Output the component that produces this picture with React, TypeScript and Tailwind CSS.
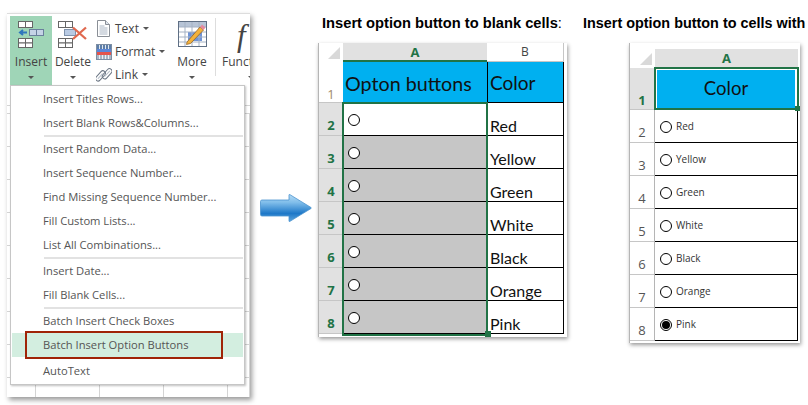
const ui = { fontFamily: '"Open Sans", sans-serif' };
const cell = { fontFamily: 'Lato, "Open Sans", sans-serif' };
const title = { fontFamily: '"Liberation Sans", sans-serif' };

const menu: (string | null)[] = [
  "Insert Titles Rows...",
  "Insert Blank Rows&Columns...",
  null,
  "Insert Random Data...",
  "Insert Sequence Number...",
  "Find Missing Sequence Number...",
  "Fill Custom Lists...",
  "List All Combinations...",
  null,
  "Insert Date...",
  "Fill Blank Cells...",
  null,
  "Batch Insert Check Boxes",
];

function Caret({ className = "" }: { className?: string }) {
  return <span className={`inline-block w-0 h-0 border-x-[3.5px] border-x-transparent border-t-[3.5px] border-t-[#555] ${className}`} />;
}

function Cells({ y, h }: { y: number; h: number }) {
  return (
    <g fill="#fff" stroke="#666">
      <rect x=".5" y={y + 0.5} width="7" height={h} />
      <rect x="7.5" y={y + 0.5} width="7" height={h} />
    </g>
  );
}

function InsertIcon() {
  return (
    <svg width="27" height="27" viewBox="0 0 27 27">
      <Cells y={0} h={6} />
      <Cells y={17} h={4.500} />
      <Cells y={21.500} h={4.500} />
      <rect x="11.500" y="8.500" width="7" height="6" fill="#c5d3e6" stroke="#6a7f9c" />
      <rect x="18.500" y="8.500" width="7" height="6" fill="#c5d3e6" stroke="#6a7f9c" />
      <path d="M9 11.500H3M5 9 2 11.500 5 14" fill="none" stroke="#2f77bd" strokeWidth="2" />
    </svg>
  );
}

function DeleteIcon() {
  return (
    <svg width="30" height="27" viewBox="0 0 30 27">
      <Cells y={0} h={6} />
      <Cells y={17} h={4.500} />
      <Cells y={21.500} h={4.500} />
      <rect x="6.500" y="8.500" width="11" height="6" fill="#b9cbe4" stroke="#8093ad" />
      <path d="M15 6.500 28 18M28 6.500 15 18" stroke="#e0694f" strokeWidth="2.300" fill="none" />
    </svg>
  );
}

function DocIcon() {
  return (
    <svg width="15" height="17" viewBox="0 0 15 17">
      <path d="M1.500.5h8l4 4v12h-12z" fill="#fff" stroke="#8a8f96" />
      <path d="M9.500.5v4h4" fill="#dfe6ee" stroke="#8a8f96" />
      <path d="M3.500 6h5M3.500 8h8M3.500 10h8M3.500 12h8M3.500 14h8" stroke="#a9b4c2" />
    </svg>
  );
}

function FormatIcon() {
  return (
    <svg width="16" height="16" viewBox="0 0 16 16">
      <rect x=".5" y=".5" width="15" height="15" fill="#fff" stroke="#7d8ea3" />
      <rect x="1" y="1" width="14" height="4" fill="#5d7ea8" />
      <path d="M3.500 1v4M6.500 1v4M9.500 1v4M12.500 1v4" stroke="#dfe6ee" />
      <rect x="1" y="5" width="14" height="3" fill="#5b86d8" />
      <rect x="1" y="8" width="14" height="3" fill="#e4544c" />
      <rect x="1" y="11" width="14" height="4" fill="#aab6c6" />
      <path d="M3.500 11v4M6.500 11v4M9.500 11v4M12.500 11v4" stroke="#eef1f5" />
    </svg>
  );
}

function LinkIcon() {
  return (
    <svg width="16" height="16" viewBox="0 0 16 16" fill="none">
      <g transform="rotate(-48 8 8)">
        <rect x="-1" y="3.500" width="12" height="5" rx="2.500" stroke="#6c7785" />
        <rect x="5" y="7" width="12" height="5" rx="2.500" stroke="#6c7785" />
        <path d="M1 6h7M7 9.500h8" stroke="#b6bfca" />
      </g>
    </svg>
  );
}

function MoreIcon() {
  return (
    <svg width="29" height="27" viewBox="0 0 29 27">
      <rect x=".5" y=".5" width="28" height="25" fill="#fff" stroke="#5f6f84" />
      <rect x="1" y="1" width="27" height="5" fill="#b7c4d6" />
      <rect x="10" y="11" width="14" height="9" fill="#6f93d6" />
      <path d="M1 6h27M1 11h27M1 16h27M1 21h27M7 1v24M14 1v24M21 1v24" stroke="#a5b2c4" />
      <path d="M9 21 22 6l3.500 3-13 13.500-4 1z" fill="#f3b23c" stroke="#8d5a1e" strokeWidth=".7" />
      <path d="M22 6l2-2.500 3.500 3-2 2.500z" fill="#e48aa0" />
    </svg>
  );
}

function Corner() {
  return (
    <svg width="12" height="12" viewBox="0 0 12 12">
      <path d="M12 0V12H0z" fill="#d9d9d9" />
    </svg>
  );
}

function RibbonItem({ label, icon, active, width }: { label: string; icon: React.ReactNode; active?: boolean; width: string }) {
  return (
    <div className={`flex flex-col items-center pt-[5px] ${width} ${active ? "bg-[#9fd5b7]" : ""}`}>
      <div className="h-[27px] flex items-center">{icon}</div>
      <span className="text-[12px] leading-[16px] mt-[6px] text-[#444] whitespace-nowrap">{label}</span>
      <Caret className="mt-[6px]" />
    </div>
  );
}

function SmallItem({ icon, label }: { icon: React.ReactNode; label: string }) {
  return (
    <div className="h-[23px] flex items-center gap-[3px] text-[12px] text-[#444]">
      <span className="w-[17px] flex justify-center">{icon}</span>
      {label}
      <Caret className="ml-[1px]" />
    </div>
  );
}

function ExcelMenu() {
  return (
    <div className="relative w-[243px] h-[384px] bg-white border-t border-[#ddd] shadow-[2px_3px_5px_rgba(0,0,0,0.4)]" style={ui}>
      <div className="flex h-[92px] pl-[3px] pt-[2px] border-b border-[#d4d4d4]">
        <RibbonItem label="Insert" icon={<InsertIcon />} active width="w-[42px]" />
        <RibbonItem label="Delete" icon={<DeleteIcon />} width="w-[42px]" />
        <div className="w-[75px] ml-[1px] pt-[1px]">
          <SmallItem icon={<DocIcon />} label="Text" />
          <SmallItem icon={<FormatIcon />} label="Format" />
          <SmallItem icon={<LinkIcon />} label="Link" />
        </div>
        <RibbonItem label="More" icon={<MoreIcon />} width="w-[44px]" />
        <div className="w-px h-[58px] mt-[2px] bg-[#ddd] ml-[1px]" />
        <div className="flex-1 overflow-hidden flex flex-col items-start pl-[6px] relative">
          <span className="absolute left-[21px] top-[4px] text-[31px] leading-[31px] italic text-[#444]" style={{ fontFamily: '"Liberation Serif", serif' }}>f</span>
          <span className="text-[12px] leading-[16px] mt-[38px] text-[#444] whitespace-nowrap">Function</span>
          <Caret className="mt-[6px] ml-[26px]" />
        </div>
      </div>
      <div className="pt-[7px] h-[291px] overflow-hidden">
        <div className="grid grid-cols-[29px_64px_64px_64px_1fr] auto-rows-[33px] border-t border-[#d4d4d4]">
          {Array.from({ length: 45 }).map((_, i) => (
            <div key={i} className="border-r border-b border-[#d4d4d4]" />
          ))}
        </div>
      </div>
      {/* dropdown opened over the ribbon */}
      <div className="absolute left-[3px] top-[71px] w-[235px] h-[300px] bg-white border border-[#c6c6c6] shadow-[1px_1px_2px_rgba(0,0,0,0.25)] px-[1px] pt-[1px]">
        {menu.map((m, i) =>
          m === null ? (
            <div key={i} className="h-[2px] ml-[32px] bg-[#e2e2e2]" />
          ) : (
            <div key={i} className="h-[24px] pl-[31px] flex items-center text-[11.2px] text-[#555] whitespace-nowrap">{m}</div>
          ),
        )}
        <div className="relative h-[24px] bg-[#d3eee0] pl-[31px] flex items-center text-[11.2px] text-[#555] whitespace-nowrap">
          Batch Insert Option Buttons
          <div className="absolute left-[13px] -top-[2px] w-[198px] h-[28px] border-2 border-[#a02408]" />
        </div>
        <div className="h-[2px]" />
        <div className="h-[24px] pl-[31px] flex items-center text-[11.2px] text-[#555]">AutoText</div>
      </div>
    </div>
  );
}

function BlueArrow() {
  return (
    <svg width="52" height="28" viewBox="0 0 52 28">
      <defs>
        <linearGradient id="ar" x1="0" y1="0" x2="0" y2="1">
          <stop offset="0" stopColor="#b6dcf5" />
          <stop offset=".3" stopColor="#7fbdea" />
          <stop offset=".7" stopColor="#1e78c8" />
          <stop offset="1" stopColor="#5da5dc" />
        </linearGradient>
      </defs>
      <path d="M2 6h27V1q0-1 1-.3L51 13.500q.8.5 0 1L30 27.300q-1 .7-1-.3V22H2q-1.500 0-1.500-1.500v-13Q.5 6 2 6z" fill="url(#ar)" stroke="#4a93cf" strokeWidth=".8" />
    </svg>
  );
}

function Radio({ on }: { on?: boolean }) {
  return (
    <span className="shrink-0 w-[12px] h-[12px] rounded-full border border-black bg-white flex items-center justify-center">
      {on && <span className="w-[8px] h-[8px] rounded-full bg-black" />}
    </span>
  );
}

function Head({ n, active, h, muted }: { n: number; active?: boolean; h: string; muted?: boolean }) {
  return (
    <div className={`${h} flex items-end justify-center border-b border-[#c6c6c6] text-[13px] leading-[16px] ${active ? "bg-[#e1e1e1] text-[#217346] font-bold" : "bg-white text-[#555]"} ${muted ? "text-[#a08a6a]" : ""}`}>
      {n}
    </div>
  );
}

const col1 = ["Red", "Yellow", "Green", "White", "Black", "Orange", "Pink"];

function LeftSheet() {
  return (
    <div className="w-[249px] h-[294px] bg-white shadow-[1px_2px_4px_rgba(0,0,0,0.4)] border-l border-[#b5b5b5]" style={ui}>
      <div className="flex h-[19px]">
        <div className="w-[24px] flex items-end justify-end pr-[3px] pb-[3px]"><Corner /></div>
        <div className="w-[144px] bg-[#e1e1e1] border-b-2 border-[#217346] text-[#217346] font-bold text-[13px] text-center leading-[18px]">A</div>
        <div className="w-[77px] border-r border-b border-[#c6c6c6] text-[#444] text-[12px] text-center leading-[18px]">B</div>
      </div>
      <div className="flex">
        <div className="w-[24px] shrink-0">
          <Head n={1} h="h-[41px]" muted />
          {[2, 3, 4, 5, 6, 7, 8].map((n) => <Head key={n} n={n} active h="h-[33px] pb-[2px]" />)}
        </div>
        <div className="w-[144px] shrink-0 relative" style={cell}>
          <div className="h-[41px] bg-[#00b0f0] flex items-center pl-[2px] pt-[2px] text-[19.7px] text-[#111] whitespace-nowrap">Opton buttons</div>
          {col1.map((_, i) => (
            <div key={i} className={`h-[33px] border-b border-black flex items-center pl-[5px] pt-[1px] ${i === 0 ? "bg-white" : "bg-[#c6c6c6]"}`}>
              <Radio />
            </div>
          ))}
          <div className="absolute left-[-1px] top-[40px] w-[146px] h-[234px] border-2 border-[#217346]" />
          <div className="absolute left-[142px] top-[269px] w-[6px] h-[6px] bg-[#217346]" />
        </div>
        <div className="w-[77px] shrink-0 border-r border-black" style={cell}>
          <div className="h-[41px] bg-[#00b0f0] border-l border-b border-black flex items-center pl-[2px] pt-[2px] text-[19px] text-[#111]">Color</div>
          {col1.map((c) => (
            <div key={c} className="h-[33px] border-b border-black flex items-end pl-[3px] text-[16px] leading-[19px] text-[#111]">{c}</div>
          ))}
        </div>
      </div>
    </div>
  );
}

function RightSheet() {
  return (
    <div className="w-[171px] h-[300px] pt-[6px] bg-white shadow-[1px_2px_4px_rgba(0,0,0,0.4)] border-l border-[#b5b5b5]" style={ui}>
      <div className="flex h-[19px]">
        <div className="w-[25px] flex items-end justify-end pr-[3px] pb-[3px]"><Corner /></div>
        <div className="w-[143px] bg-[#e1e1e1] text-[#217346] font-bold text-[13px] text-center leading-[18px]">A</div>
      </div>
      <div className="flex">
        <div className="w-[25px] shrink-0 border-r border-[#b5b5b5]">
          <Head n={1} active h="h-[42px] pb-[1px]" />
          {[2, 3, 4, 5, 6, 7, 8].map((n) => <Head key={n} n={n} h="h-[33px] pb-[2px]" />)}
        </div>
        <div className="w-[143px] shrink-0 relative border-r border-black">
          <div className="h-[42px] bg-[#00b0f0] border-2 border-white flex items-center justify-center text-[18.5px] text-[#111]" style={cell}>Color</div>
          {col1.map((c, i) => (
            <div key={c} className="h-[33px] border-b border-black flex items-center gap-[4px] pl-[5px] pt-[1px] text-[10px] text-[#333]">
              <Radio on={i === 6} />
              {c}
            </div>
          ))}
          <div className="absolute left-[-1px] top-[-1px] w-[145px] h-[43px] border-2 border-[#217346]" />
          <div className="absolute left-[140px] top-[38px] w-[5px] h-[5px] bg-[#217346]" />
        </div>
      </div>
    </div>
  );
}

export default function App() {
  return (
    <div className="w-[808px] h-[405px] overflow-hidden bg-white flex">
      <div className="ml-[7px] mt-[13px] shrink-0">
        <ExcelMenu />
      </div>
      <div className="ml-[10px] mt-[194px] shrink-0 w-[58px]">
        <BlueArrow />
      </div>
      <div className="shrink-0">
        <div className="h-[43px] pt-[14px] pl-[4px] text-[14.7px] leading-[18px] font-bold text-black whitespace-nowrap" style={title}>
          Insert option button to blank cells<span className="font-normal">:</span>
        </div>
        <LeftSheet />
      </div>
      <div className="ml-[62px] shrink-0">
        <div className="h-[43px] pt-[14px] -ml-[46px] text-[14.4px] leading-[18px] font-bold text-black whitespace-nowrap" style={title}>
          Insert option button to cells with
        </div>
        <RightSheet />
      </div>
    </div>
  );
}
